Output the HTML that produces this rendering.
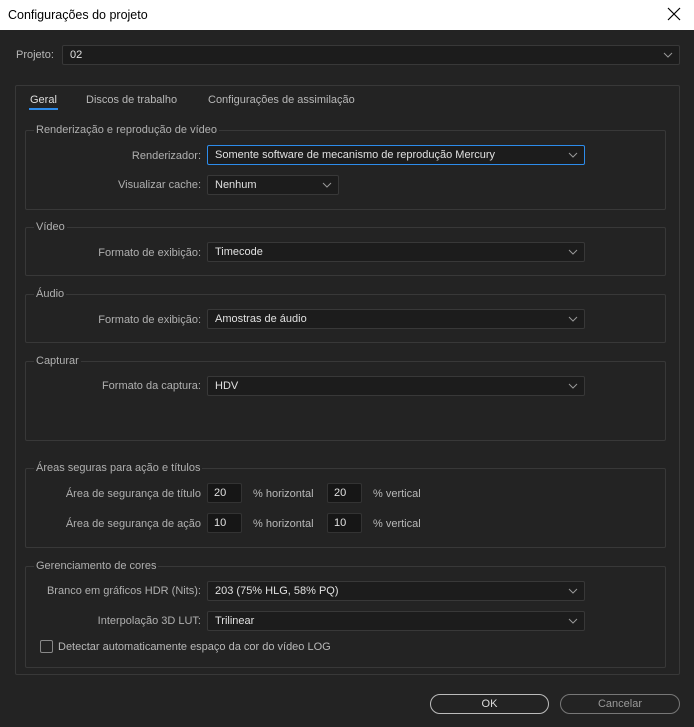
<!DOCTYPE html><html><head><style>
*{box-sizing:border-box;margin:0;padding:0}
body{width:694px;height:727px;background:#232323;font-family:"Liberation Sans",sans-serif;font-size:11px;color:#b8b8b8;position:relative;overflow:hidden}
.a{position:absolute;white-space:nowrap}
.title{left:0;top:0;width:694px;height:30px;background:#fff;color:#000;font-size:12.5px;padding:8px 0 0 8px}
.dd{position:absolute;background:#1c1c1c;border:1px solid #383838;border-radius:2px;color:#e0e0e0;padding:3px 0 0 7px;height:20px}
.dd svg{position:absolute;right:6px;top:6px}
.grp{position:absolute;border:1px solid #383838;border-radius:2px;left:25px;width:641px}
.gt{position:absolute;left:8px;top:-7px;background:#232323;padding:0 2px;color:#b0b0b0}
.lbl{position:absolute;text-align:right;color:#b0b0b0}
.in{position:absolute;background:#161616;border:1px solid #333;border-radius:2px;height:20px;width:35px;color:#e0e0e0;padding:3px 0 0 6px}
.btn{position:absolute;top:694px;height:20px;border:1px solid #aaa;border-radius:10px;text-align:center;padding-top:3px}
</style></head><body>
<div class="a title">Configurações do projeto</div>
<svg class="a" style="left:667px;top:7px" width="14" height="14"><path d="M1 1L13 13M13 1L1 13" stroke="#000" stroke-width="1.2"/></svg>
<div class="a" style="left:16px;top:49px">Projeto:</div>
<div class="dd" style="left:62px;top:45px;width:618px">02<svg width="10" height="6"><path d="M1 1L5 5L9 1" stroke="#999" fill="none"/></svg></div>
<div class="a" style="left:15px;top:85px;width:665px;height:590px;border:1px solid #383838;border-radius:2px"></div>
<div class="a" style="left:30px;top:94px;color:#ddd">Geral</div>
<div class="a" style="left:29px;top:108px;width:29px;height:2px;background:#2d8ceb"></div>
<div class="a" style="left:86px;top:94px">Discos de trabalho</div>
<div class="a" style="left:208px;top:94px">Configurações de assimilação</div>

<div class="grp" style="top:130px;height:80px"><span class="gt">Renderização e reprodução de vídeo</span></div>
<div class="lbl" style="left:60px;width:141px;top:150px">Renderizador:</div>
<div class="dd" style="left:207px;top:145px;width:378px;border-color:#2d8ceb">Somente software de mecanismo de reprodução Mercury<svg width="10" height="6"><path d="M1 1L5 5L9 1" stroke="#999" fill="none"/></svg></div>
<div class="lbl" style="left:60px;width:141px;top:179px">Visualizar cache:</div>
<div class="dd" style="left:207px;top:175px;width:132px">Nenhum<svg width="10" height="6"><path d="M1 1L5 5L9 1" stroke="#999" fill="none"/></svg></div>

<div class="grp" style="top:227px;height:49px"><span class="gt">Vídeo</span></div>
<div class="lbl" style="left:40px;width:161px;top:247px">Formato de exibição:</div>
<div class="dd" style="left:207px;top:242px;width:378px">Timecode<svg width="10" height="6"><path d="M1 1L5 5L9 1" stroke="#999" fill="none"/></svg></div>

<div class="grp" style="top:294px;height:49px"><span class="gt">Áudio</span></div>
<div class="lbl" style="left:40px;width:161px;top:314px">Formato de exibição:</div>
<div class="dd" style="left:207px;top:309px;width:378px">Amostras de áudio<svg width="10" height="6"><path d="M1 1L5 5L9 1" stroke="#999" fill="none"/></svg></div>

<div class="grp" style="top:361px;height:80px"><span class="gt">Capturar</span></div>
<div class="lbl" style="left:40px;width:161px;top:380px">Formato da captura:</div>
<div class="dd" style="left:207px;top:376px;width:378px">HDV<svg width="10" height="6"><path d="M1 1L5 5L9 1" stroke="#999" fill="none"/></svg></div>

<div class="grp" style="top:468px;height:80px"><span class="gt">Áreas seguras para ação e títulos</span></div>
<div class="lbl" style="left:40px;width:161px;top:488px">Área de segurança de título</div>
<div class="in" style="left:207px;top:483px">20</div>
<div class="a" style="left:253px;top:488px">% horizontal</div>
<div class="in" style="left:327px;top:483px">20</div>
<div class="a" style="left:373px;top:488px">% vertical</div>
<div class="lbl" style="left:40px;width:161px;top:518px">Área de segurança de ação</div>
<div class="in" style="left:207px;top:513px">10</div>
<div class="a" style="left:253px;top:518px">% horizontal</div>
<div class="in" style="left:327px;top:513px">10</div>
<div class="a" style="left:373px;top:518px">% vertical</div>

<div class="grp" style="top:566px;height:102px"><span class="gt">Gerenciamento de cores</span></div>
<div class="lbl" style="left:30px;width:171px;top:585px">Branco em gráficos HDR (Nits):</div>
<div class="dd" style="left:207px;top:581px;width:378px">203 (75% HLG, 58% PQ)<svg width="10" height="6"><path d="M1 1L5 5L9 1" stroke="#999" fill="none"/></svg></div>
<div class="lbl" style="left:40px;width:161px;top:615px">Interpolação 3D LUT:</div>
<div class="dd" style="left:207px;top:611px;width:378px">Trilinear<svg width="10" height="6"><path d="M1 1L5 5L9 1" stroke="#999" fill="none"/></svg></div>
<div class="a" style="left:40px;top:640px;width:13px;height:13px;border:1.5px solid #888;border-radius:2px"></div>
<div class="a" style="left:58px;top:641px">Detectar automaticamente espaço da cor do vídeo LOG</div>

<div class="btn" style="left:430px;width:119px;color:#ddd;border-color:#bbb">OK</div>
<div class="btn" style="left:560px;width:120px;color:#999;border-color:#777">Cancelar</div>
</body></html>
